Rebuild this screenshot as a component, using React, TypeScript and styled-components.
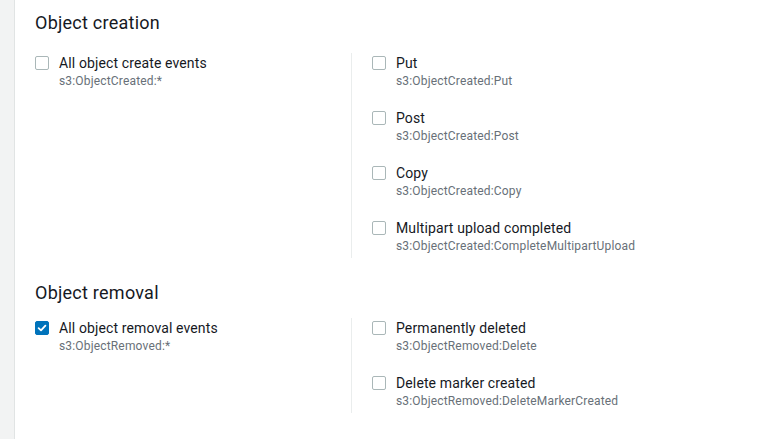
import styled, { createGlobalStyle } from 'styled-components'

const GlobalStyle = createGlobalStyle`
    html, body {
        margin: 0;
        padding: 0;
        background: #ffffff;
    }
    body {
        font-family: Roboto, "Noto Sans", "Liberation Sans", sans-serif;
        color: #16191f;
        -webkit-font-smoothing: antialiased;
    }
`

const Page = styled.div`
    display: flex;
    min-height: 439px;
`

const SideStrip = styled.div`
    width: 14px;
    flex-shrink: 0;
    background-color: #f2f3f3;
    border-right: 1px solid #e1e4e4;
`

const Content = styled.div`
    flex: 1;
    padding: 12px 20px 0 20px;
`

const Section = styled.section<{ $gap: number }>`
    margin-bottom: 24px;
    h2 {
        margin: 0 0 ${({ $gap }) => $gap}px 0;
        font-size: 18px;
        line-height: 22px;
        font-weight: 400;
        letter-spacing: 0.25px;
        color: #16191f;
    }
`

const Columns = styled.div`
    display: grid;
    grid-template-columns: 316px 1fr;
`

const Column = styled.div<{ $divided?: boolean }>`
    display: flex;
    flex-direction: column;
    gap: 19px;
    padding-bottom: 4px;
    ${({ $divided }) =>
        $divided &&
        `
        border-left: 1px solid #eaeded;
        padding-left: 20px;
    `}
`

const Option = styled.label`
    display: flex;
    align-items: flex-start;
    gap: 10px;
    cursor: pointer;

    .box {
        margin-top: 3px;
        width: 14px;
        height: 14px;
        box-sizing: border-box;
        border: 1.5px solid #aab7b8;
        border-radius: 2px;
        background: #fff;
        display: flex;
        align-items: center;
        justify-content: center;
        flex-shrink: 0;
    }
    .box.checked {
        background: #0073bb;
        border-color: #0073bb;
    }

    .text {
        display: flex;
        flex-direction: column;
    }
    .name {
        font-size: 14px;
        line-height: 20px;
        letter-spacing: 0.12px;
        color: #16191f;
    }
    .event {
        font-size: 12px;
        line-height: 16px;
        letter-spacing: 0.17px;
        color: #687078;
    }
`

type Item = { name: string; event: string; checked?: boolean }

const CheckOption = ({ name, event, checked }: Item) => (
    <Option>
        <span className={checked ? 'box checked' : 'box'}>
            {checked && (
                <svg width="10" height="10" viewBox="0 0 10 10">
                    <path d="M1.6 5.2 L4 7.4 L8.4 2.6" fill="none" stroke="#fff" strokeWidth="1.8" strokeLinecap="round" strokeLinejoin="round" />
                </svg>
            )}
        </span>
        <span className="text">
            <span className="name">{name}</span>
            <span className="event">{event}</span>
        </span>
    </Option>
)

const creation: Item[] = [
    { name: 'Put', event: 's3:ObjectCreated:Put' },
    { name: 'Post', event: 's3:ObjectCreated:Post' },
    { name: 'Copy', event: 's3:ObjectCreated:Copy' },
    { name: 'Multipart upload completed', event: 's3:ObjectCreated:CompleteMultipartUpload' },
]

const removal: Item[] = [
    { name: 'Permanently deleted', event: 's3:ObjectRemoved:Delete' },
    { name: 'Delete marker created', event: 's3:ObjectRemoved:DeleteMarkerCreated' },
]

export default function App() {
    return (
        <>
            <GlobalStyle />
            <Page>
                <SideStrip />
                <Content>
                    <Section $gap={19}>
                        <h2>Object creation</h2>
                        <Columns>
                            <Column>
                                <CheckOption name="All object create events" event="s3:ObjectCreated:*" />
                            </Column>
                            <Column $divided>
                                {creation.map((item) => (
                                    <CheckOption key={item.event} {...item} />
                                ))}
                            </Column>
                        </Columns>
                    </Section>
                    <Section $gap={14}>
                        <h2>Object removal</h2>
                        <Columns>
                            <Column>
                                <CheckOption name="All object removal events" event="s3:ObjectRemoved:*" checked />
                            </Column>
                            <Column $divided>
                                {removal.map((item) => (
                                    <CheckOption key={item.event} {...item} />
                                ))}
                            </Column>
                        </Columns>
                    </Section>
                </Content>
            </Page>
        </>
    )
}
